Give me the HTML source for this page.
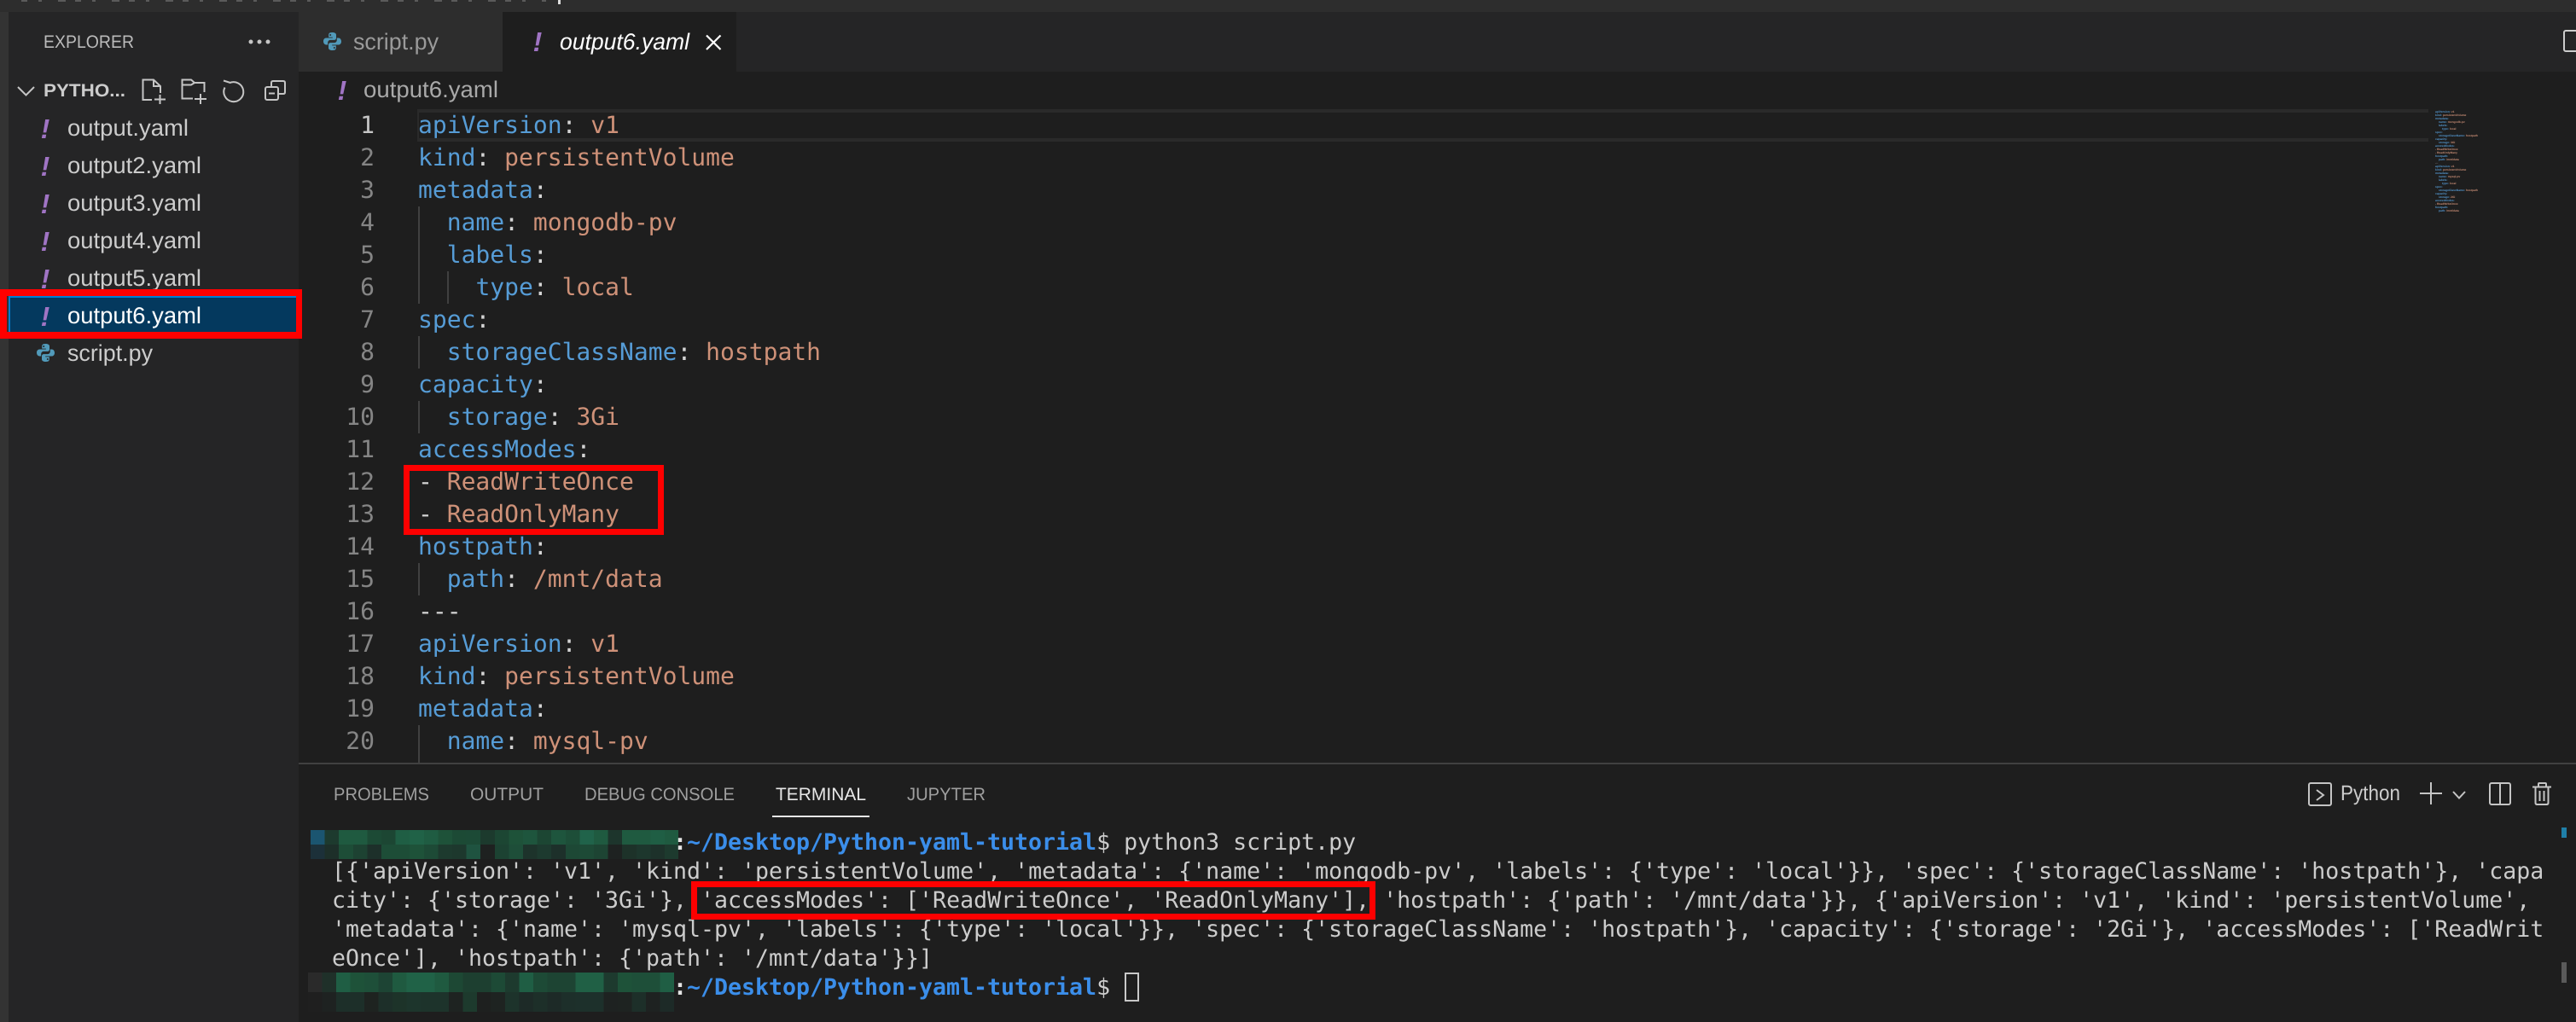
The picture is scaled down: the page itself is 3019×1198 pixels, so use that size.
<!DOCTYPE html>
<html lang="en"><head><meta charset="utf-8"><title>VS Code</title>
<style>
html,body{margin:0;padding:0;background:#1e1e1e}
body{position:relative;width:3019px;height:1198px;overflow:hidden;text-rendering:geometricPrecision}
pre{margin:0;position:absolute;font-family:"DejaVu Sans Mono","Liberation Mono",monospace}
#code{left:490px;top:128px;font-size:28px;line-height:38px;color:#d4d4d4;height:767px;overflow:hidden}
#nums{left:380px;width:59px;top:128px;font-size:28px;line-height:38px;color:#858585;text-align:right;height:767px;overflow:hidden}
#term{left:389px;top:971px;font-size:26.58px;line-height:34px;color:#cccccc}
.k{color:#569cd6}.v{color:#ce9178}
.b{color:#3b8eea;font-weight:bold}.w{color:#e5e5e5;font-weight:bold}
svg{position:absolute;left:0;top:0}
.box{position:absolute;box-sizing:border-box;border:7px solid #fe0000}
text{font-family:"Liberation Sans",sans-serif}
</style></head><body>
<svg width="3019" height="1198" viewBox="0 0 3019 1198">
<defs>
<g id="py"><path fill="#519aba" fill-rule="evenodd" d="M10.3 0C6.8 0 6.2 1.4 6.2 3V5.6H10.8V6.5H3.4C1.5 6.5 0 8 0 10.4 0 12.8 1.5 14.5 3.4 14.5H5.2V12C5.2 10.2 6.6 8.9 8.2 8.9H12.6C14 8.9 15 7.9 15 6.4V3C15 1.3 13.7 0 10.3 0ZM8.2 2A1 1 0 1 1 8.2 4 1 1 0 1 1 8.2 2Z"/><path fill="#519aba" fill-rule="evenodd" transform="rotate(180 10.5 10.5)" d="M10.3 0C6.8 0 6.2 1.4 6.2 3V5.6H10.8V6.5H3.4C1.5 6.5 0 8 0 10.4 0 12.8 1.5 14.5 3.4 14.5H5.2V12C5.2 10.2 6.6 8.9 8.2 8.9H12.6C14 8.9 15 7.9 15 6.4V3C15 1.3 13.7 0 10.3 0ZM8.2 2A1 1 0 1 1 8.2 4 1 1 0 1 1 8.2 2Z"/></g>
</defs>
<!-- chrome -->
<rect width="3019" height="14" fill="#2d2d2d"/>
<path d="M25 1H640" stroke="#5a5a5a" stroke-width="2" stroke-dasharray="7 13 4 19 9 11"/>
<rect x="654" y="0" width="3" height="5" fill="#ddd"/>
<rect x="0" y="14" width="10" height="1184" fill="#333333"/>
<rect x="10" y="14" width="340" height="1184" fill="#252526"/>
<rect x="350" y="14" width="2669" height="70" fill="#252526"/>
<rect x="350" y="14" width="239" height="70" fill="#2d2d2d"/>
<rect x="589" y="14" width="274" height="70" fill="#1e1e1e"/>
<!-- sidebar -->
<text x="51" y="56" font-size="21" fill="#bbbbbb" textLength="106" lengthAdjust="spacingAndGlyphs">EXPLORER</text>
<g fill="#c5c5c5"><circle cx="294" cy="49" r="2.5"/><circle cx="304" cy="49" r="2.5"/><circle cx="314" cy="49" r="2.5"/></g>
<path d="M21 102L30.500 111.500L40 102" fill="none" stroke="#c5c5c5" stroke-width="2"/>
<text x="51" y="113" font-size="21" font-weight="bold" fill="#cccccc" textLength="96" lengthAdjust="spacingAndGlyphs">PYTHO...</text>
<g fill="none" stroke="#c5c5c5" stroke-width="2">
<path d="M178 117H167.500V93.500H180L188 101V109M180 93.500V101H188"/>
<path d="M187.500 111V122M181 116.500H194"/>
<path d="M226 115.500H213.500V93.500H224L228 97H239.500V108M213.500 99.500H224L228 97"/>
<path d="M235 110V122M228 116H242"/>
<path d="M269 97.200A11.500 11.500 0 1 1 263.500 102.500M262 94.500L270 97"/>
<path d="M318 102V97Q318 95 320 95H332Q334 95 334 97V108Q334 110 332 110H326"/>
<rect x="311" y="102" width="15" height="15" rx="2"/><path d="M315 109.500H322"/>
</g>
<rect x="10" y="347" width="337" height="44" fill="#04395e"/>
<rect x="10" y="347" width="337" height="2" fill="#007fd4"/><rect x="10" y="347" width="2" height="44" fill="#007fd4"/>
<g font-size="32" font-weight="bold" font-style="italic" fill="#a074c4" text-anchor="middle">
<text x="53" y="162">!</text><text x="53" y="206">!</text><text x="53" y="250">!</text><text x="53" y="294">!</text><text x="53" y="338">!</text><text x="53" y="382">!</text>
<text x="630" y="60">!</text><text x="401" y="117">!</text></g>
<g font-size="27" fill="#cccccc">
<text x="79" y="159" textLength="142" lengthAdjust="spacingAndGlyphs">output.yaml</text>
<text x="79" y="203" textLength="157" lengthAdjust="spacingAndGlyphs">output2.yaml</text>
<text x="79" y="247" textLength="157" lengthAdjust="spacingAndGlyphs">output3.yaml</text>
<text x="79" y="291" textLength="157" lengthAdjust="spacingAndGlyphs">output4.yaml</text>
<text x="79" y="335" textLength="157" lengthAdjust="spacingAndGlyphs">output5.yaml</text>
<text x="79" y="379" fill="#ffffff" textLength="157" lengthAdjust="spacingAndGlyphs">output6.yaml</text>
<text x="79" y="423" textLength="100" lengthAdjust="spacingAndGlyphs">script.py</text>
<text x="414" y="58" fill="#9a9a9a" textLength="100" lengthAdjust="spacingAndGlyphs">script.py</text>
<text x="656" y="58" fill="#ffffff" font-style="italic" textLength="152" lengthAdjust="spacingAndGlyphs">output6.yaml</text>
<text x="426" y="114" fill="#a9a9a9" textLength="158" lengthAdjust="spacingAndGlyphs">output6.yaml</text>
</g>
<use href="#py" x="43" y="403"/>
<use href="#py" x="379" y="38"/>
<path d="M828 41.500L844.500 58M844.500 41.500L828 58" stroke="#fff" stroke-width="2.200" fill="none"/>
<rect x="3005" y="36" width="26" height="24" rx="2" fill="none" stroke="#cccccc" stroke-width="2"/>
<!-- editor decorations -->
<path d="M490 130H2846M490 164H2846" stroke="#2a2a2a" stroke-width="4"/>
<path d="M490 128V166" stroke="#2a2a2a" stroke-width="2"/>
<g fill="#404040">
<rect x="490" y="242" width="2" height="114"/><rect x="524" y="318" width="2" height="38"/>
<rect x="490" y="394" width="2" height="38"/><rect x="490" y="470" width="2" height="38"/>
<rect x="490" y="660" width="2" height="38"/><rect x="490" y="850" width="2" height="45"/>
</g>
<!-- minimap -->
<g font-size="3.320" style="font-family:'DejaVu Sans Mono',monospace" opacity=".95" font-weight="bold">
<text x="2854" y="132" fill="#569cd6">apiVersion: <tspan fill="#ce9178">v1</tspan></text>
<text x="2854" y="136" fill="#569cd6">kind: <tspan fill="#ce9178">persistentVolume</tspan></text>
<text x="2854" y="140" fill="#569cd6">metadata:</text>
<text x="2858" y="144" fill="#569cd6">name: <tspan fill="#ce9178">mongodb-pv</tspan></text>
<text x="2858" y="148" fill="#569cd6">labels:</text>
<text x="2862" y="152" fill="#569cd6">type: <tspan fill="#ce9178">local</tspan></text>
<text x="2854" y="156" fill="#569cd6">spec:</text>
<text x="2858" y="160" fill="#569cd6">storageClassName: <tspan fill="#ce9178">hostpath</tspan></text>
<text x="2854" y="164" fill="#569cd6">capacity:</text>
<text x="2858" y="168" fill="#569cd6">storage: <tspan fill="#ce9178">3Gi</tspan></text>
<text x="2854" y="172" fill="#569cd6">accessModes:</text>
<text x="2854" y="176" fill="#ce9178">- ReadWriteOnce</text>
<text x="2854" y="180" fill="#ce9178">- ReadOnlyMany</text>
<text x="2854" y="184" fill="#569cd6">hostpath:</text>
<text x="2858" y="188" fill="#569cd6">path: <tspan fill="#ce9178">/mnt/data</tspan></text>
<text x="2854" y="192" fill="#888888">---</text>
<text x="2854" y="196" fill="#569cd6">apiVersion: <tspan fill="#ce9178">v1</tspan></text>
<text x="2854" y="200" fill="#569cd6">kind: <tspan fill="#ce9178">persistentVolume</tspan></text>
<text x="2854" y="204" fill="#569cd6">metadata:</text>
<text x="2858" y="208" fill="#569cd6">name: <tspan fill="#ce9178">mysql-pv</tspan></text>
<text x="2858" y="212" fill="#569cd6">labels:</text>
<text x="2862" y="216" fill="#569cd6">type: <tspan fill="#ce9178">local</tspan></text>
<text x="2854" y="220" fill="#569cd6">spec:</text>
<text x="2858" y="224" fill="#569cd6">storageClassName: <tspan fill="#ce9178">hostpath</tspan></text>
<text x="2854" y="228" fill="#569cd6">capacity:</text>
<text x="2858" y="232" fill="#569cd6">storage: <tspan fill="#ce9178">2Gi</tspan></text>
<text x="2854" y="236" fill="#569cd6">accessModes:</text>
<text x="2854" y="240" fill="#ce9178">- ReadWriteOnce</text>
<text x="2854" y="244" fill="#569cd6">hostpath:</text>
<text x="2858" y="248" fill="#569cd6">path: <tspan fill="#ce9178">/mnt/data</tspan></text>
</g>
<!-- panel -->
<rect x="350" y="894" width="2669" height="2" fill="#414141"/>
<g font-size="21" fill="#9f9f9f">
<text x="391" y="938" textLength="112" lengthAdjust="spacingAndGlyphs">PROBLEMS</text>
<text x="551" y="938" textLength="86" lengthAdjust="spacingAndGlyphs">OUTPUT</text>
<text x="685" y="938" textLength="176" lengthAdjust="spacingAndGlyphs">DEBUG CONSOLE</text>
<text x="909" y="938" fill="#e7e7e7" textLength="106" lengthAdjust="spacingAndGlyphs">TERMINAL</text>
<text x="1063" y="938" textLength="92" lengthAdjust="spacingAndGlyphs">JUPYTER</text>
</g>
<rect x="905" y="956" width="114" height="2" fill="#e7e7e7"/>
<g fill="none" stroke="#c5c5c5" stroke-width="2">
<rect x="2706" y="918" width="26" height="26" rx="2"/><path d="M2715 926L2723 932L2715 938"/>
<path d="M2836 930H2862M2849 917V943"/>
<path d="M2875 928L2882 935.500L2889 928"/>
<rect x="2918" y="918" width="24" height="25" rx="2"/><path d="M2930 918V943"/>
<path d="M2968 922.500H2990M2975 922V919Q2975 918 2976 918H2983Q2984 918 2984 919V922M2971.500 923V941Q2971.500 943 2973.500 943H2984.500Q2986.500 943 2986.500 941V923M2976.500 927V939M2981.500 927V939"/>
</g>
<text x="2743" y="938" font-size="25" fill="#cccccc" textLength="70" lengthAdjust="spacingAndGlyphs">Python</text>
<rect x="3002" y="970" width="6" height="12" fill="#1f7fa8"/>
<rect x="3002" y="1128" width="6" height="24" fill="#5a5a5a"/>
<!-- mosaic 1 -->
<g shape-rendering="crispEdges">
<rect x="364" y="973" width="17" height="17" fill="#1b5570"/><rect x="380.600" y="973" width="17" height="17" fill="#1d3a2e"/><rect x="397.200" y="973" width="17" height="17" fill="#1f5a40"/><rect x="413.800" y="973" width="17" height="17" fill="#1f5a40"/><rect x="430.400" y="973" width="17" height="17" fill="#1c4a35"/><rect x="447" y="973" width="17" height="17" fill="#1c4633"/><rect x="463.600" y="973" width="17" height="17" fill="#1f5e44"/><rect x="480.200" y="973" width="17" height="17" fill="#206247"/><rect x="496.800" y="973" width="17" height="17" fill="#1f5c42"/><rect x="513.400" y="973" width="17" height="17" fill="#1e5239"/><rect x="530" y="973" width="17" height="17" fill="#1c4a35"/><rect x="546.600" y="973" width="17" height="17" fill="#1c4a36"/><rect x="563.200" y="973" width="17" height="17" fill="#1c3a2d"/><rect x="579.800" y="973" width="17" height="17" fill="#1c4633"/><rect x="596.400" y="973" width="17" height="17" fill="#1e5239"/><rect x="613" y="973" width="17" height="17" fill="#1e553d"/><rect x="629.600" y="973" width="17" height="17" fill="#1c4633"/><rect x="646.200" y="973" width="17" height="17" fill="#1e553d"/><rect x="662.800" y="973" width="17" height="17" fill="#1d4e38"/><rect x="679.400" y="973" width="17" height="17" fill="#20634a"/><rect x="696" y="973" width="17" height="17" fill="#1f5a40"/><rect x="712.600" y="973" width="17" height="17" fill="#1d352c"/><rect x="729.200" y="973" width="17" height="17" fill="#1f5a40"/><rect x="745.800" y="973" width="17" height="17" fill="#1f5a40"/><rect x="762.400" y="973" width="17" height="17" fill="#1f5e44"/><rect x="779" y="973" width="16" height="17" fill="#1f5a40"/>
<rect x="364" y="990" width="17" height="17" fill="#1c3039"/><rect x="380.600" y="990" width="17" height="17" fill="#1d2f29"/><rect x="397.200" y="990" width="17" height="17" fill="#1d4d37"/><rect x="413.800" y="990" width="17" height="17" fill="#1d4232"/><rect x="430.400" y="990" width="17" height="17" fill="#1d302a"/><rect x="447" y="990" width="17" height="17" fill="#1d4d37"/><rect x="463.600" y="990" width="17" height="17" fill="#1d4d37"/><rect x="480.200" y="990" width="17" height="17" fill="#1e5239"/><rect x="496.800" y="990" width="17" height="17" fill="#1d4a36"/><rect x="513.400" y="990" width="17" height="17" fill="#1d3a2e"/><rect x="530" y="990" width="17" height="17" fill="#1d382d"/><rect x="546.600" y="990" width="17" height="17" fill="#1f5340"/><rect x="563.200" y="990" width="17" height="17" fill="#1e2120"/><rect x="579.800" y="990" width="17" height="17" fill="#1c4232"/><rect x="596.400" y="990" width="17" height="17" fill="#1e4e39"/><rect x="613" y="990" width="17" height="17" fill="#1d332b"/><rect x="629.600" y="990" width="17" height="17" fill="#1d3a2f"/><rect x="646.200" y="990" width="17" height="17" fill="#1d302a"/><rect x="662.800" y="990" width="17" height="17" fill="#1d4835"/><rect x="679.400" y="990" width="17" height="17" fill="#1d4a36"/><rect x="696" y="990" width="17" height="17" fill="#1d4433"/><rect x="712.600" y="990" width="17" height="17" fill="#1e2221"/><rect x="729.200" y="990" width="17" height="17" fill="#1d3229"/><rect x="745.800" y="990" width="17" height="17" fill="#1d372d"/><rect x="762.400" y="990" width="17" height="17" fill="#1d312a"/><rect x="779" y="990" width="16" height="17" fill="#1d3a2e"/>
<!-- mosaic 2 -->
<rect x="361" y="1140" width="17" height="23" fill="#2a2a2a"/><rect x="377.500" y="1140" width="17" height="23" fill="#1f3029"/><rect x="394" y="1140" width="17" height="23" fill="#1f5e44"/><rect x="410.500" y="1140" width="17" height="23" fill="#1e5239"/><rect x="427" y="1140" width="17" height="23" fill="#1e4f39"/><rect x="443.500" y="1140" width="17" height="23" fill="#1d4434"/><rect x="460" y="1140" width="17" height="23" fill="#1f5a40"/><rect x="476.500" y="1140" width="17" height="23" fill="#206247"/><rect x="493" y="1140" width="17" height="23" fill="#206247"/><rect x="509.500" y="1140" width="17" height="23" fill="#1f5a40"/><rect x="526" y="1140" width="17" height="23" fill="#1d4834"/><rect x="542.500" y="1140" width="17" height="23" fill="#1d3f30"/><rect x="559" y="1140" width="17" height="23" fill="#1d3f30"/><rect x="575.500" y="1140" width="17" height="23" fill="#1d4a36"/><rect x="592" y="1140" width="17" height="23" fill="#1d3a2e"/><rect x="608.500" y="1140" width="17" height="23" fill="#1f5e44"/><rect x="625" y="1140" width="17" height="23" fill="#1d4a36"/><rect x="641.500" y="1140" width="17" height="23" fill="#1d4433"/><rect x="658" y="1140" width="17" height="23" fill="#1d4433"/><rect x="674.500" y="1140" width="17" height="23" fill="#206045"/><rect x="691" y="1140" width="17" height="23" fill="#206045"/><rect x="707.500" y="1140" width="17" height="23" fill="#1d3a2e"/><rect x="724" y="1140" width="17" height="23" fill="#1e5239"/><rect x="740.500" y="1140" width="17" height="23" fill="#1e4f39"/><rect x="757" y="1140" width="17" height="23" fill="#1e4f39"/><rect x="773.500" y="1140" width="16.500" height="23" fill="#1f5e44"/>
<rect x="361" y="1163" width="17" height="23" fill="#1f1f1f"/><rect x="377.500" y="1163" width="17" height="23" fill="#1e2221"/><rect x="394" y="1163" width="17" height="23" fill="#1d2f29"/><rect x="410.500" y="1163" width="17" height="23" fill="#1d2f29"/><rect x="427" y="1163" width="17" height="23" fill="#1e2320"/><rect x="443.500" y="1163" width="17" height="23" fill="#1d2f29"/><rect x="460" y="1163" width="17" height="23" fill="#1d3329"/><rect x="476.500" y="1163" width="17" height="23" fill="#1d352c"/><rect x="493" y="1163" width="17" height="23" fill="#1d332b"/><rect x="509.500" y="1163" width="17" height="23" fill="#1d332b"/><rect x="526" y="1163" width="17" height="23" fill="#1e2321"/><rect x="542.500" y="1163" width="17" height="23" fill="#1d3a2d"/><rect x="559" y="1163" width="17" height="23" fill="#1e201f"/><rect x="575.500" y="1163" width="17" height="23" fill="#1e2321"/><rect x="592" y="1163" width="17" height="23" fill="#1d332b"/><rect x="608.500" y="1163" width="17" height="23" fill="#1d2a27"/><rect x="625" y="1163" width="17" height="23" fill="#1d2f29"/><rect x="641.500" y="1163" width="17" height="23" fill="#1d2a27"/><rect x="658" y="1163" width="17" height="23" fill="#1d2f2a"/><rect x="674.500" y="1163" width="17" height="23" fill="#1d302b"/><rect x="691" y="1163" width="17" height="23" fill="#1d302b"/><rect x="707.500" y="1163" width="17" height="23" fill="#1e2221"/><rect x="724" y="1163" width="17" height="23" fill="#1e2321"/><rect x="740.500" y="1163" width="17" height="23" fill="#1d2f29"/><rect x="757" y="1163" width="17" height="23" fill="#1e2221"/><rect x="773.500" y="1163" width="16.500" height="23" fill="#1d2a27"/>
</g>
<rect x="1319" y="1141" width="15" height="32" fill="none" stroke="#c8c8c8" stroke-width="2"/>
</svg>
<pre id="nums"><span style="color:#c6c6c6">1</span>
2
3
4
5
6
7
8
9
10
11
12
13
14
15
16
17
18
19
20</pre>
<pre id="code"><span class="k">apiVersion</span>: <span class="v">v1</span>
<span class="k">kind</span>: <span class="v">persistentVolume</span>
<span class="k">metadata</span>:
  <span class="k">name</span>: <span class="v">mongodb-pv</span>
  <span class="k">labels</span>:
    <span class="k">type</span>: <span class="v">local</span>
<span class="k">spec</span>:
  <span class="k">storageClassName</span>: <span class="v">hostpath</span>
<span class="k">capacity</span>:
  <span class="k">storage</span>: <span class="v">3Gi</span>
<span class="k">accessModes</span>:
- <span class="v">ReadWriteOnce</span>
- <span class="v">ReadOnlyMany</span>
<span class="k">hostpath</span>:
  <span class="k">path</span>: <span class="v">/mnt/data</span>
---
<span class="k">apiVersion</span>: <span class="v">v1</span>
<span class="k">kind</span>: <span class="v">persistentVolume</span>
<span class="k">metadata</span>:
  <span class="k">name</span>: <span class="v">mysql-pv</span></pre>
<pre id="term"><span style="position:absolute;left:400px;top:0" ><span class="w">:</span><span class="b">~/Desktop/Python-yaml-tutorial</span>$ python3 script.py</span>
[{'apiVersion': 'v1', 'kind': 'persistentVolume', 'metadata': {'name': 'mongodb-pv', 'labels': {'type': 'local'}}, 'spec': {'storageClassName': 'hostpath'}, 'capa
city': {'storage': '3Gi'}, 'accessModes': ['ReadWriteOnce', 'ReadOnlyMany'], 'hostpath': {'path': '/mnt/data'}}, {'apiVersion': 'v1', 'kind': 'persistentVolume',
'metadata': {'name': 'mysql-pv', 'labels': {'type': 'local'}}, 'spec': {'storageClassName': 'hostpath'}, 'capacity': {'storage': '2Gi'}, 'accessModes': ['ReadWrit
eOnce'], 'hostpath': {'path': '/mnt/data'}}]
<span style="position:absolute;left:400px;top:170px"><span class="w">:</span><span class="b">~/Desktop/Python-yaml-tutorial</span>$</span></pre>
<div class="box" style="left:0;top:339px;width:354px;height:58px;border-width:8px 7px 8px 8px"></div>
<div class="box" style="left:473px;top:545px;width:305px;height:82px"></div>
<div class="box" style="left:810px;top:1033px;width:802px;height:45px"></div>
</body></html>
